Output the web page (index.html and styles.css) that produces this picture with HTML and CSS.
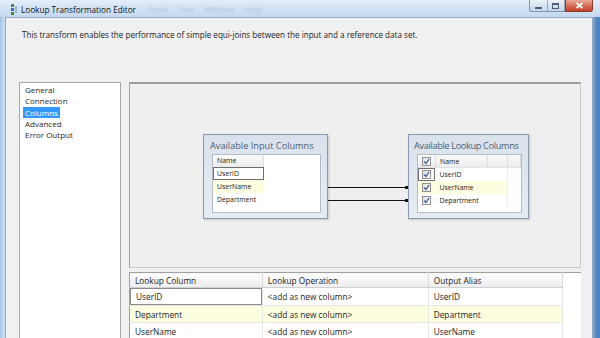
FILE: index.html
```html
<!DOCTYPE html>
<html lang="en">
<head>
    <meta charset="UTF-8">
    <meta name="viewport" content="width=device-width, initial-scale=1.0">
    <title>Lookup Transformation Editor</title>
    <link rel="stylesheet" href="styles.css">
</head>
<body>
    <div class="window">
        <div class="titlebar">
            <svg class="app-icon" width="8" height="11" viewBox="0 0 8 11">
                <rect x="1" y="0" width="3" height="3" fill="#3b8f3b" />
                <rect x="1" y="4" width="3" height="3" fill="#3b6fb5" />
                <rect x="1" y="8" width="3" height="3" fill="#3b8f3b" />
                <rect x="5" y="2" width="2" height="7" fill="#9bb6d4" />
            </svg>
            <span class="title">Lookup Transformation Editor</span>
            <span class="ghost-menu">Tools&nbsp;&nbsp;&nbsp;&nbsp;&nbsp;Test&nbsp;&nbsp;&nbsp;&nbsp;&nbsp;Window&nbsp;&nbsp;&nbsp;&nbsp;&nbsp;Help</span>
            <div class="controls">
                <div class="ctl-group">
                    <span class="ctl-btn"><span class="glyph-min"></span></span>
                    <span class="ctl-btn"><span class="glyph-max"></span></span>
                </div>
                <div class="btn-close">
                    <svg width="9" height="7" viewBox="0 0 9 7">
                        <path d="M1.5 0.8 L7.5 6.2 M7.5 0.8 L1.5 6.2" stroke="#fff" stroke-width="1.8" />
                    </svg>
                </div>
            </div>
        </div>

        <div class="client">
            <p class="intro">This transform enables the performance of simple equi-joins between the input and a reference data set.</p>

            <div class="main">
                <ul class="pages">
                    <li>General</li>
                    <li>Connection</li>
                    <li><span class="selected">Columns</span></li>
                    <li>Advanced</li>
                    <li>Error Output</li>
                </ul>

                <div class="content">
                    <div class="diagram">
                        <div class="node node-input">
                            <div class="node-title">Available Input Columns</div>
                            <div class="node-list">
                                <table class="cols">
                                    <tr class="head">
                                        <td class="c-name">Name</td>
                                        <td></td>
                                    </tr>
                                    <tr>
                                        <td class="c-name focus">UserID</td>
                                        <td></td>
                                    </tr>
                                    <tr class="hl">
                                        <td class="c-name">UserName</td>
                                        <td class="plain"></td>
                                    </tr>
                                    <tr>
                                        <td class="c-name">Department</td>
                                        <td></td>
                                    </tr>
                                </table>
                            </div>
                        </div>

                        <svg class="links" width="80" height="85" viewBox="0 0 80 85">
                            <line x1="0" y1="53.5" x2="79" y2="53.5" stroke="#111" stroke-width="1.2" />
                            <line x1="0" y1="66.5" x2="79" y2="66.5" stroke="#111" stroke-width="1.2" />
                            <rect x="77" y="52" width="3" height="3" fill="#111" />
                            <rect x="77" y="65" width="3" height="3" fill="#111" />
                        </svg>

                        <div class="node node-lookup">
                            <div class="node-title">Available Lookup Columns</div>
                            <div class="node-list">
                                <table class="cols">
                                    <tr class="head">
                                        <td class="c-chk"><span class="chk"><svg width="7" height="7" viewBox="0 0 7 7"><path d="M1 3.5 L3 5.5 L6 1" fill="none" stroke="#3d5a8f" stroke-width="1.3" /></svg></span></td>
                                        <td class="c-lname">Name</td>
                                        <td class="c-extra"></td>
                                        <td></td>
                                    </tr>
                                    <tr>
                                        <td class="c-chk focus"><span class="chk"><svg width="7" height="7" viewBox="0 0 7 7"><path d="M1 3.5 L3 5.5 L6 1" fill="none" stroke="#3d5a8f" stroke-width="1.3" /></svg></span></td>
                                        <td class="c-lname">UserID</td>
                                        <td class="c-extra"></td>
                                        <td></td>
                                    </tr>
                                    <tr class="hl">
                                        <td class="c-chk"><span class="chk"><svg width="7" height="7" viewBox="0 0 7 7"><path d="M1 3.5 L3 5.5 L6 1" fill="none" stroke="#3d5a8f" stroke-width="1.3" /></svg></span></td>
                                        <td class="c-lname">UserName</td>
                                        <td class="c-extra"></td>
                                        <td class="plain"></td>
                                    </tr>
                                    <tr>
                                        <td class="c-chk"><span class="chk"><svg width="7" height="7" viewBox="0 0 7 7"><path d="M1 3.5 L3 5.5 L6 1" fill="none" stroke="#3d5a8f" stroke-width="1.3" /></svg></span></td>
                                        <td class="c-lname">Department</td>
                                        <td class="c-extra"></td>
                                        <td></td>
                                    </tr>
                                </table>
                            </div>
                        </div>
                    </div>

                    <table class="grid">
                        <tr class="grid-head">
                            <td class="g1">Lookup Column</td>
                            <td class="g2">Lookup Operation</td>
                            <td class="g3">Output Alias</td>
                            <td class="g4"></td>
                        </tr>
                        <tr>
                            <td class="g1"><span class="cell-focus">UserID</span></td>
                            <td>&lt;add as new column&gt;</td>
                            <td>UserID</td>
                            <td class="g4"></td>
                        </tr>
                        <tr class="hl">
                            <td class="g1">Department</td>
                            <td>&lt;add as new column&gt;</td>
                            <td>Department</td>
                            <td class="g4"></td>
                        </tr>
                        <tr>
                            <td class="g1">UserName</td>
                            <td>&lt;add as new column&gt;</td>
                            <td>UserName</td>
                            <td class="g4"></td>
                        </tr>
                    </table>
                </div>
            </div>
        </div>
    </div>
</body>
</html>
```

FILE: styles.css
```css
* {
  margin: 0;
  padding: 0;
  box-sizing: border-box;
}

body {
  width: 600px;
  height: 338px;
  overflow: hidden;
  font-family: "Open Sans", "Noto Sans", sans-serif;
  font-size: 8.5px;
  color: #1e1e1e;
  background-color: #f0f0f0;
}

.window {
  width: 600px;
  height: 338px;
  display: flex;
  flex-direction: column;
  background: linear-gradient(90deg, #9cc0e4 0px, #c4dbf1 3px, #d9e7f5 60%, #b9d3ee 98%, #4f83bf 99.5%);
}

/* title bar */

.titlebar {
  height: 17px;
  flex-shrink: 0;
  display: flex;
  align-items: center;
  padding-left: 10px;
  background: linear-gradient(180deg, #e4eef9 0%, #d2e2f3 50%, #c3d8ef 100%);
}

.app-icon {
  margin-right: 3px;
  margin-top: 1px;
}

.title {
  font-size: 8.2px;
  color: #111;
  margin-top: 1px;
}

.ghost-menu {
  margin-left: 12px;
  font-size: 8px;
  color: rgba(90, 105, 125, 0.3);
  filter: blur(0.8px);
}

.controls {
  margin-left: auto;
  margin-right: 7px;
  align-self: flex-start;
  display: flex;
}

.ctl-group {
  display: flex;
  width: 36px;
  height: 12px;
  border: 1px solid #7e94b0;
  border-top: none;
  border-right: none;
  border-radius: 0 0 0 3px;
  background: linear-gradient(180deg, #eef4fa 0%, #d6e3f1 50%, #c4d5ea 100%);
}

.ctl-btn {
  flex: 1;
  display: flex;
  align-items: center;
  justify-content: center;
  border-right: 1px solid #93a7c0;
}

.glyph-min {
  width: 7px;
  height: 2px;
  margin-top: 4px;
  background-color: #4d5f78;
}

.glyph-max {
  width: 7px;
  height: 6px;
  border: 1px solid #4d5f78;
  border-top-width: 2px;
}

.btn-close {
  width: 28px;
  height: 12px;
  display: flex;
  align-items: center;
  justify-content: center;
  border: 1px solid #8a3b2c;
  border-top: none;
  border-radius: 0 0 3px 0;
  background: linear-gradient(180deg, #eeaa98 0%, #d8715a 50%, #c2412a 100%);
}

/* client area */

.client {
  flex: 1;
  min-height: 0;
  overflow: hidden;
  margin-left: 5px;
  margin-right: 7px;
  background-color: #f0f0f0;
  border: 1px solid #98a9bd;
  border-bottom: none;
}

.intro {
  padding: 11px 0 0 16px;
  height: 64px;
  font-size: 8.1px;
  line-height: 11px;
  color: #1b1b1b;
}

.main {
  display: flex;
  gap: 8px;
  padding-left: 13px;
}

.pages {
  list-style: none;
  flex-shrink: 0;
  width: 102px;
  height: 270px;
  background-color: #fff;
  border: 1px solid #a9a9a9;
  padding: 0 0 0 3px;
}

.pages li {
  height: 11.3px;
  line-height: 11.3px;
  padding-left: 2px;
  font-size: 8px;
}

.pages li:first-child {
  margin-top: 1px;
}

.pages .selected {
  display: inline-block;
  background-color: #3399ff;
  color: #fff;
  padding: 0 2px;
  margin-left: -2px;
}

.content {
  width: 452px;
  flex-shrink: 0;
  display: flex;
  flex-direction: column;
  gap: 4px;
}

/* diagram */

.diagram {
  height: 186px;
  flex-shrink: 0;
  display: flex;
  align-items: flex-start;
  padding: 50px 0 0 73px;
  background-color: #efefef;
  border: 1px solid #c8c8c8;
  border-top: 2px solid #9c9c9c;
  border-left: 1px solid #a4a4a4;
}

.node {
  height: 85px;
  flex-shrink: 0;
  padding: 0 6px 6px 8px;
  background: linear-gradient(180deg, #d9e2ec 0%, #e6ecf3 100%);
  border: 1px solid #8b9aac;
  box-shadow: 1px 1px 2px rgba(0, 0, 0, 0.18);
}

.node-input {
  width: 125px;
}

.node-lookup {
  width: 121px;
}

.node-title {
  height: 19px;
  line-height: 22px;
  font-size: 9.2px;
  white-space: nowrap;
  color: #4e5d70;
  margin-left: -2px;
  margin-right: -6px;
}

.node-lookup .node-title {
  letter-spacing: -0.35px;
  margin-left: -3px;
}

.node-list {
  height: 59px;
  background-color: #fff;
  border: 1px solid #b4bcc7;
}

.cols {
  border-collapse: collapse;
  font-size: 6.9px;
  color: #222;
}

.cols td {
  height: 13px;
  padding: 0 0 0 4px;
  white-space: nowrap;
}

.cols .head td {
  height: 12px;
  background: linear-gradient(180deg, #fbfbfb 0%, #ececec 100%);
  border-right: 1px solid #dcdcdc;
  border-bottom: 1px solid #e2e2e2;
}

.node-input .cols .head td:last-child {
  background: #fff;
  border: none;
}

.node-input .c-name {
  width: 51px;
}

.cols .focus {
  outline: 1px solid #6f6f6f;
  outline-offset: -1px;
}

.cols .hl td {
  background-color: #fdfde0;
}

.cols .hl td.plain {
  background-color: #fff;
}

.node-input .cols .hl td:last-child {
  width: 60px;
}

.c-chk {
  width: 18px;
  padding: 0 !important;
  text-align: center;
}

.c-lname {
  width: 53px;
}

.c-extra {
  width: 21px;
  border-right: 1px solid #ececec;
}

.node-lookup .cols td:last-child {
  width: 13px;
}

.chk {
  display: inline-flex;
  align-items: center;
  justify-content: center;
  width: 9px;
  height: 9px;
  margin-top: 2px;
  border: 1px solid #8e8f8f;
  background: linear-gradient(135deg, #e2e2e2 0%, #fbfbfb 100%);
}

.links {
  flex-shrink: 0;
}

/* grid */

.grid {
  width: 452px;
  border-collapse: collapse;
  background-color: #fff;
  border-top: 1px solid #a0a0a0;
  border-left: 1px solid #a0a0a0;
  font-size: 8.3px;
  color: #222;
}

.grid td {
  height: 17px;
  padding-left: 5px;
  border-bottom: 1px solid #e6e6e6;
  border-right: 1px solid #e6e6e6;
  white-space: nowrap;
}

.grid .grid-head td {
  height: 15px;
  background: linear-gradient(180deg, #fdfdfd 0%, #eeeeee 100%);
  border-right: 1px solid #d9d9d9;
  border-bottom: 1px solid #d0d0d0;
}

.grid .grid-head td.g4 {
  background: #fff;
  border: none;
}

.grid .g1 {
  width: 133px;
}

.grid .g2 {
  width: 166px;
}

.grid .g3 {
  width: 134px;
}

.grid td.g4 {
  width: 19px;
  border-right: none;
  border-bottom: none;
  background-color: #fff;
}

.grid .hl td {
  background-color: #fdfde0;
}

.grid .hl td.g4 {
  background-color: #fff;
}

.grid td:has(.cell-focus) {
  padding: 0;
}

.cell-focus {
  display: flex;
  align-items: center;
  height: 17px;
  padding-left: 5px;
  border: 1px solid #8a8a8a;
}
```
